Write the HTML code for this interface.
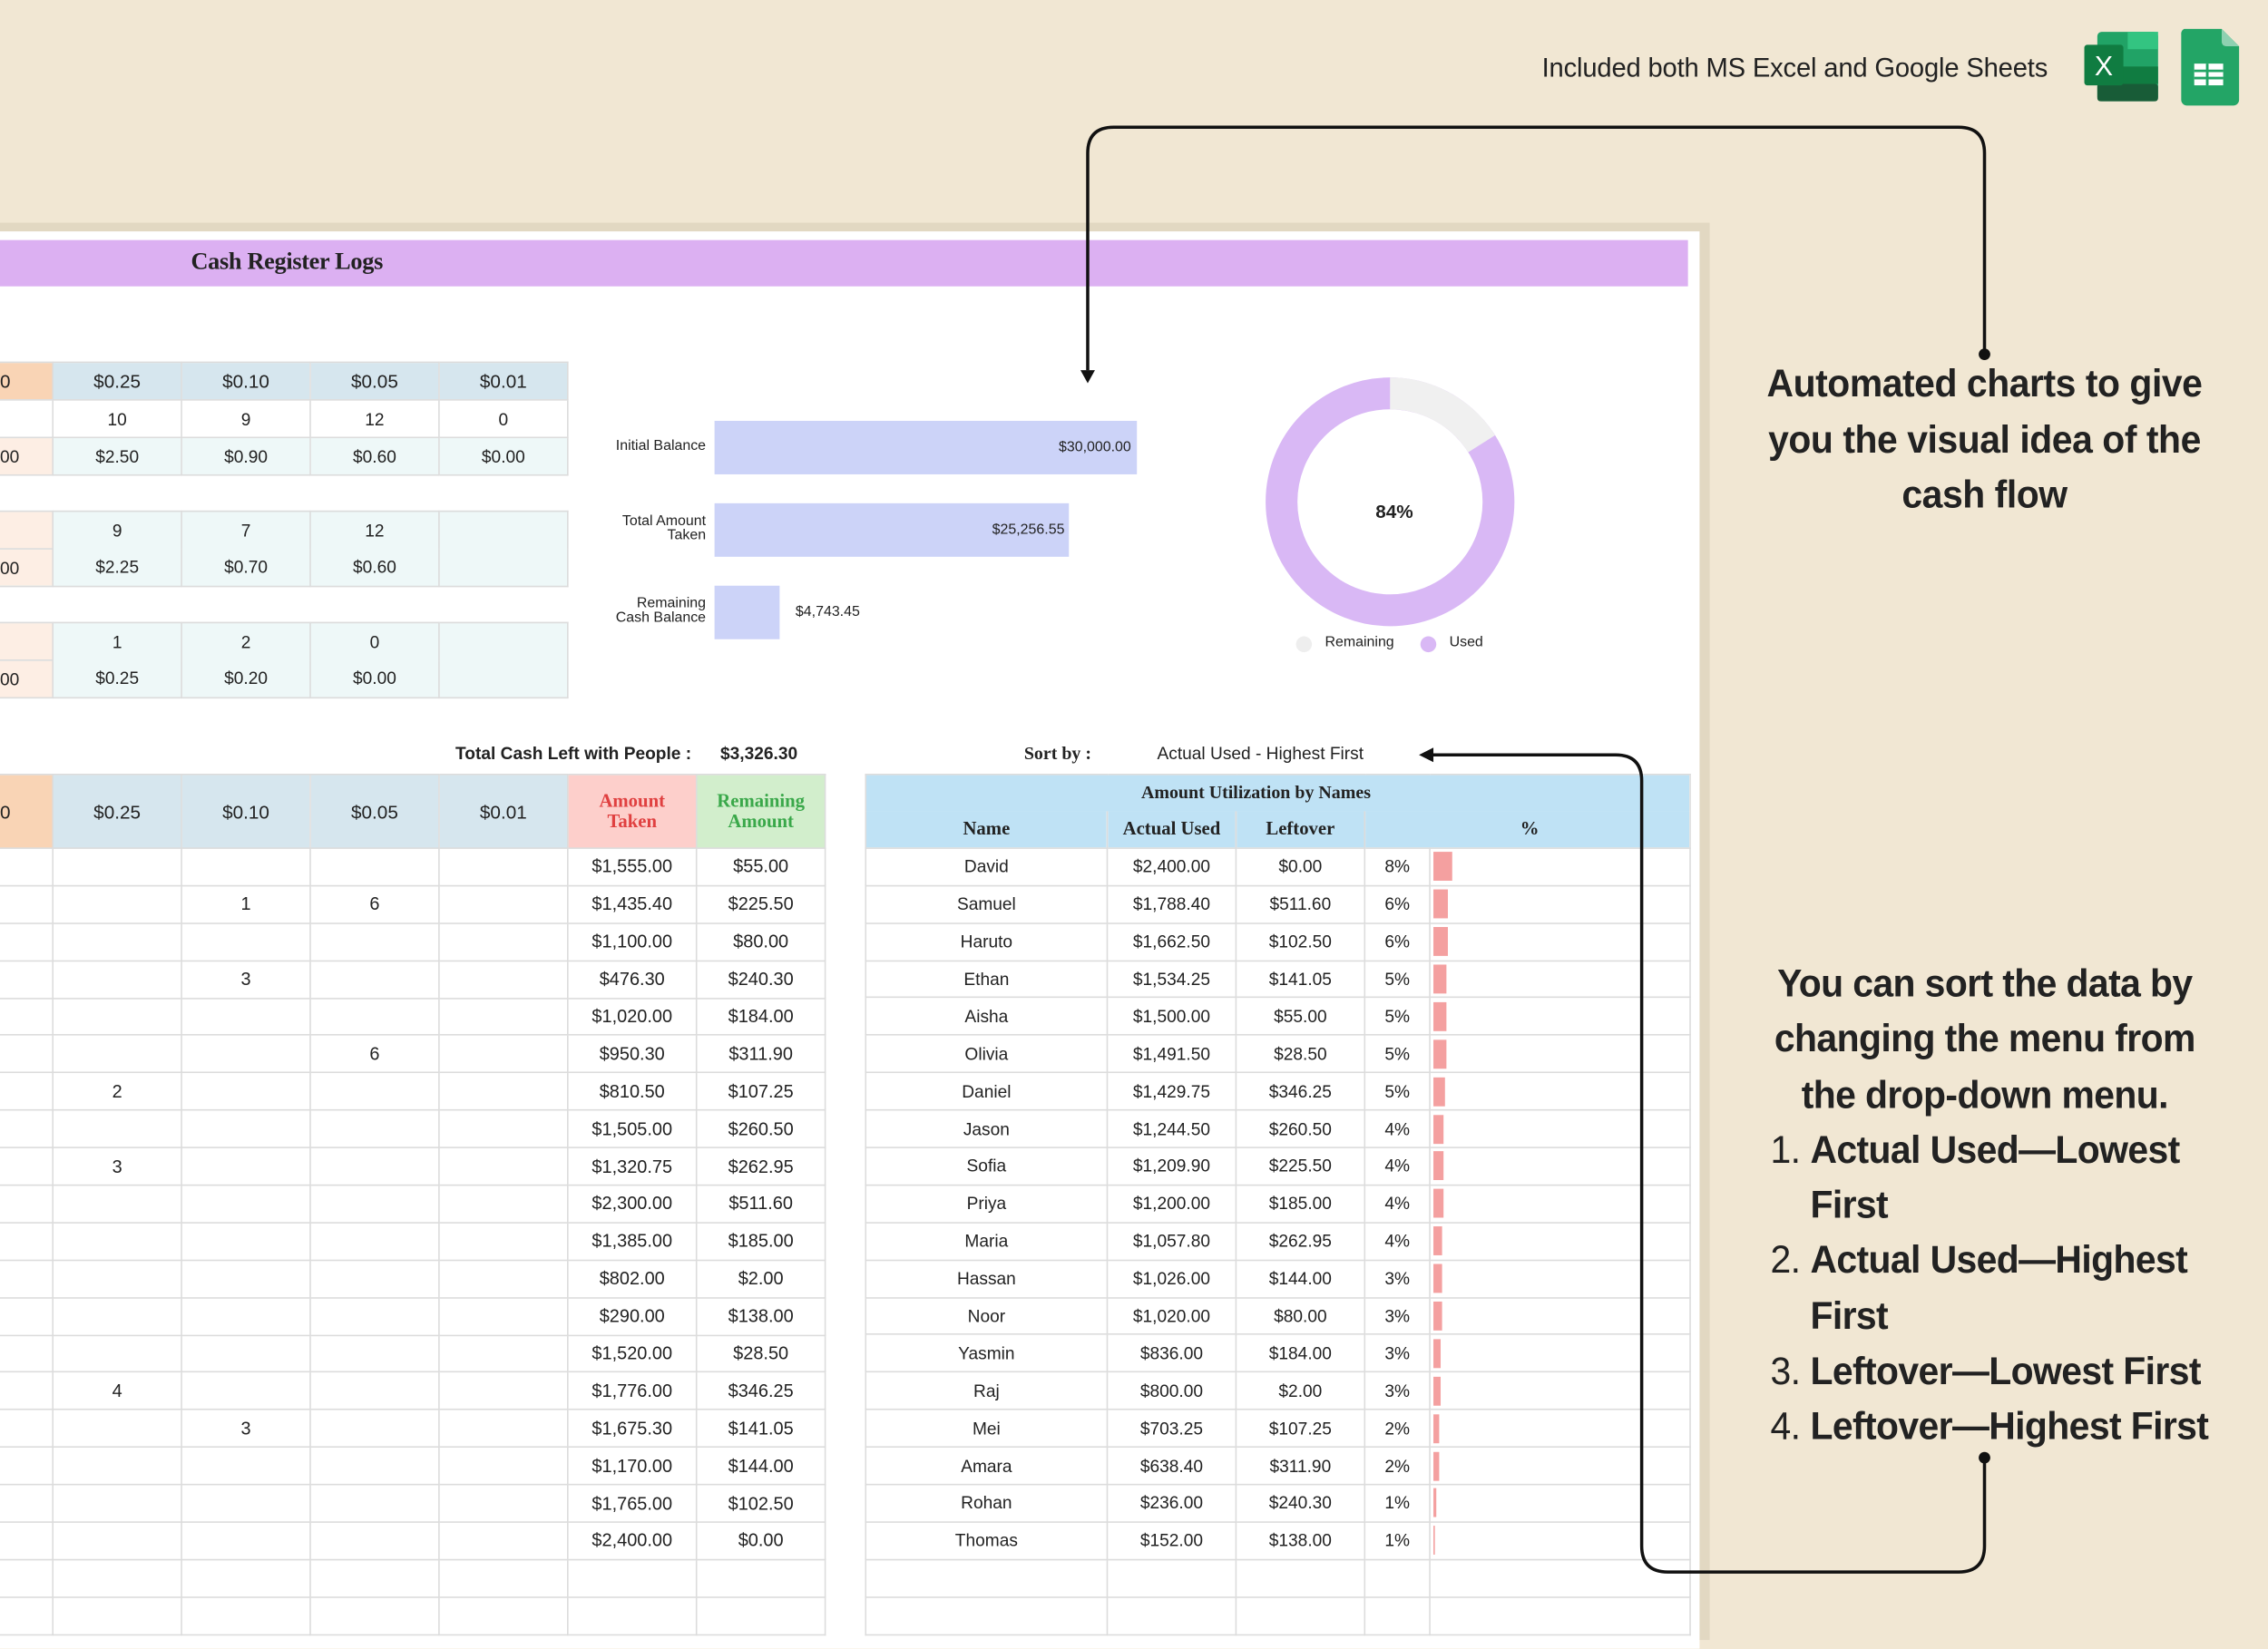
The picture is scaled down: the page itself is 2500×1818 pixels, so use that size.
<!DOCTYPE html>
<html><head><meta charset="utf-8"><style>
*{margin:0;padding:0;box-sizing:border-box}
html,body{width:2500px;height:1800px;overflow:hidden;background:#f1e7d3}
#w{position:absolute;left:0;top:0;width:1568px;height:1129px;transform:scale(1.59439);transform-origin:0 0;font-family:"Liberation Sans",sans-serif;color:#222}
.a{position:absolute}
table{border-collapse:collapse;table-layout:fixed;position:absolute;font-size:12px;text-align:center}
td{border:1px solid #dcdcdc;height:26px;padding:0;overflow:hidden;white-space:nowrap}
.h td{background:#d6e6ee;font-size:13px}
.o{background:#f9d4b5!important}
.ol{background:#fdeee4!important}
.lb{background:#eef8f8}
.big td{height:25.9px}
.rt td{height:25.9px}
.serif{font-family:"Liberation Serif",serif;font-weight:bold}
.bar{display:inline-block;height:20px;background:#f4a0a0;vertical-align:middle;float:left;margin-left:2px}
.big{font-size:12.5px}
.n{font-weight:normal;display:inline-block;width:29px;text-indent:0}
.li{padding-left:29px;text-indent:-29px}
</style></head><body><div id="w">

<div class="a" style="left:1066px;top:36px;font-size:18.3px;color:#222;letter-spacing:-0.1px">Included both MS Excel and Google Sheets</div>
<svg class="a" style="left:1438px;top:20px" width="60" height="54" viewBox="0 0 60 54">
<rect x="12" y="2" width="42" height="48" rx="3" fill="#21a366"/>
<rect x="33" y="2" width="21" height="12" fill="#33c481"/>
<rect x="12" y="26" width="42" height="12" fill="#107c41"/>
<rect x="12" y="38" width="42" height="12" rx="2" fill="#185c37"/>
<rect x="3" y="11" width="27" height="28" rx="2" fill="#107c41"/>
<text x="16.5" y="32" font-family="Liberation Sans" font-size="19" fill="#fff" text-anchor="middle">X</text>
</svg>
<svg class="a" style="left:1506px;top:19px" width="44" height="56" viewBox="0 0 44 56">
<path d="M4 1 H30 L42 13 V50 a4 4 0 0 1 -4 4 H6 a4 4 0 0 1 -4 -4 V5 a4 4 0 0 1 2 -4z" fill="#23a566"/>
<path d="M30 1 L42 13 H33 a3 3 0 0 1 -3 -3z" fill="#8ed1b1"/>
<rect x="11" y="25" width="20" height="15" fill="#fff"/>
<path d="M11 30H31M11 35H31M20 25V40" stroke="#23a566" stroke-width="1.8"/>
</svg>

<div class="a" style="left:0;top:154px;width:1182px;height:980px;background:#e2d8c2"></div>
<div class="a" style="left:0;top:160px;width:1175px;height:980px;background:#fff"></div>
<div class="a" style="left:0;top:166px;width:1167px;height:32px;background:#dcb0f2"></div>
<div class="a serif" style="left:132px;top:171px;font-size:16.5px;letter-spacing:-0.2px">Cash Register Logs</div>

<table style="left:-1px;top:250px;width:394px">
<colgroup><col style="width:37px"><col style="width:89px"><col style="width:89px"><col style="width:89px"><col style="width:89px"></colgroup>
<tr class="h"><td class="o" style="text-align:left">0</td><td>$0.25</td><td>$0.10</td><td>$0.05</td><td>$0.01</td></tr>
<tr><td></td><td>10</td><td>9</td><td>12</td><td>0</td></tr>
<tr class="lb"><td class="ol" style="text-align:left">00</td><td>$2.50</td><td>$0.90</td><td>$0.60</td><td>$0.00</td></tr>
</table>
<table style="left:-1px;top:353px;width:394px" class="lb">
<colgroup><col style="width:37px"><col style="width:89px"><col style="width:89px"><col style="width:89px"><col style="width:89px"></colgroup>
<tr><td class="ol"></td><td style="border-bottom:0">9</td><td style="border-bottom:0">7</td><td style="border-bottom:0">12</td><td rowspan="2"></td></tr>
<tr><td class="ol" style="text-align:left">00</td><td style="border-top:0">$2.25</td><td style="border-top:0">$0.70</td><td style="border-top:0">$0.60</td></tr>
</table>
<table style="left:-1px;top:430px;width:394px" class="lb">
<colgroup><col style="width:37px"><col style="width:89px"><col style="width:89px"><col style="width:89px"><col style="width:89px"></colgroup>
<tr><td class="ol"></td><td style="border-bottom:0">1</td><td style="border-bottom:0">2</td><td style="border-bottom:0">0</td><td rowspan="2"></td></tr>
<tr><td class="ol" style="text-align:left">00</td><td style="border-top:0">$0.25</td><td style="border-top:0">$0.20</td><td style="border-top:0">$0.00</td></tr>
</table>

<div class="a" style="left:400px;top:304px;width:88px;text-align:right;font-size:10px;line-height:10px">Initial Balance</div>
<div class="a" style="left:400px;top:356px;width:88px;text-align:right;font-size:10px;line-height:10px">Total Amount<br>Taken</div>
<div class="a" style="left:400px;top:413px;width:88px;text-align:right;font-size:10px;line-height:10px">Remaining<br>Cash Balance</div>
<div class="a" style="left:494px;top:291px;width:292px;height:37px;background:#ccd3f8"></div>
<div class="a" style="left:494px;top:348px;width:245px;height:37px;background:#ccd3f8"></div>
<div class="a" style="left:494px;top:405px;width:45px;height:37px;background:#ccd3f8"></div>
<div class="a" style="left:700px;top:304px;width:82px;text-align:right;font-size:10px">$30,000.00</div>
<div class="a" style="left:650px;top:361px;width:86px;text-align:right;font-size:10px">$25,256.55</div>
<div class="a" style="left:550px;top:418px;font-size:10px">$4,743.45</div>

<svg class="a" style="left:871px;top:257px" width="180" height="180" viewBox="0 0 180 180">
<circle cx="90" cy="90" r="75" fill="none" stroke="#d9b8f5" stroke-width="22"/>
<circle cx="90" cy="90" r="75" fill="none" stroke="#f0f0f0" stroke-width="22" stroke-dasharray="75.4 400" transform="rotate(-90 90 90)"/>
<text x="93" y="101" font-family="Liberation Sans" font-weight="bold" font-size="13" text-anchor="middle" fill="#222">84%</text>
</svg>
<div class="a" style="left:896px;top:440px;width:11px;height:11px;border-radius:50%;background:#eeeeee"></div>
<div class="a" style="left:916px;top:439px;font-size:10px">Remaining</div>
<div class="a" style="left:982px;top:440px;width:11px;height:11px;border-radius:50%;background:#d9b8f5"></div>
<div class="a" style="left:1002px;top:439px;font-size:10px">Used</div>

<div class="a" style="left:300px;top:514px;width:178px;text-align:right;font-size:12px;font-weight:bold">Total Cash Left with People :</div>
<div class="a" style="left:498px;top:514px;font-size:12px;font-weight:bold">$3,326.30</div>
<div class="a serif" style="left:708px;top:514px;font-size:12.5px">Sort by :</div>
<div class="a" style="left:800px;top:514px;font-size:12px">Actual Used - Highest First</div>

<table class="big" style="left:-1px;top:535px;width:572px">
<colgroup><col style="width:37px"><col style="width:89px"><col style="width:89px"><col style="width:89px"><col style="width:89px"><col style="width:89px"><col style="width:89px"></colgroup>
<tr class="h" style="height:51px"><td class="o" style="text-align:left;height:51px">0</td><td>$0.25</td><td>$0.10</td><td>$0.05</td><td>$0.01</td><td class="serif" style="background:#fdcfcb;color:#e04040;font-size:13px;line-height:14px">Amount<br>Taken</td><td class="serif" style="background:#d2eecc;color:#3aa84a;font-size:13px;line-height:14px">Remaining<br>Amount</td></tr>
<tr><td></td><td></td><td></td><td></td><td></td><td>$1,555.00</td><td>$55.00</td></tr>
<tr><td></td><td></td><td>1</td><td>6</td><td></td><td>$1,435.40</td><td>$225.50</td></tr>
<tr><td></td><td></td><td></td><td></td><td></td><td>$1,100.00</td><td>$80.00</td></tr>
<tr><td></td><td></td><td>3</td><td></td><td></td><td>$476.30</td><td>$240.30</td></tr>
<tr><td></td><td></td><td></td><td></td><td></td><td>$1,020.00</td><td>$184.00</td></tr>
<tr><td></td><td></td><td></td><td>6</td><td></td><td>$950.30</td><td>$311.90</td></tr>
<tr><td></td><td>2</td><td></td><td></td><td></td><td>$810.50</td><td>$107.25</td></tr>
<tr><td></td><td></td><td></td><td></td><td></td><td>$1,505.00</td><td>$260.50</td></tr>
<tr><td></td><td>3</td><td></td><td></td><td></td><td>$1,320.75</td><td>$262.95</td></tr>
<tr><td></td><td></td><td></td><td></td><td></td><td>$2,300.00</td><td>$511.60</td></tr>
<tr><td></td><td></td><td></td><td></td><td></td><td>$1,385.00</td><td>$185.00</td></tr>
<tr><td></td><td></td><td></td><td></td><td></td><td>$802.00</td><td>$2.00</td></tr>
<tr><td></td><td></td><td></td><td></td><td></td><td>$290.00</td><td>$138.00</td></tr>
<tr><td></td><td></td><td></td><td></td><td></td><td>$1,520.00</td><td>$28.50</td></tr>
<tr><td></td><td>4</td><td></td><td></td><td></td><td>$1,776.00</td><td>$346.25</td></tr>
<tr><td></td><td></td><td>3</td><td></td><td></td><td>$1,675.30</td><td>$141.05</td></tr>
<tr><td></td><td></td><td></td><td></td><td></td><td>$1,170.00</td><td>$144.00</td></tr>
<tr><td></td><td></td><td></td><td></td><td></td><td>$1,765.00</td><td>$102.50</td></tr>
<tr><td></td><td></td><td></td><td></td><td></td><td>$2,400.00</td><td>$0.00</td></tr>
<tr><td></td><td></td><td></td><td></td><td></td><td></td><td></td></tr>
<tr><td></td><td></td><td></td><td></td><td></td><td></td><td></td></tr>
</table>

<table class="rt" style="left:598px;top:535px;width:570px">
<colgroup><col style="width:167px"><col style="width:89px"><col style="width:89px"><col style="width:45px"><col style="width:180px"></colgroup>
<tr><td colspan="5" class="serif" style="background:#bfe2f5;border-bottom:0;height:25px;font-size:12.5px;text-align:left;padding-left:190px">Amount Utilization by Names</td></tr>
<tr class="serif" style="background:#bfe2f5;font-size:13px"><td style="border-top:0">Name</td><td style="border-top:0">Actual Used</td><td style="border-top:0">Leftover</td><td colspan="2" style="border-top:0;padding-left:0;text-align:left;text-indent:107px">%</td></tr>
<tr><td>David</td><td>$2,400.00</td><td>$0.00</td><td>8%</td><td><span class="bar" style="width:13px"></span></td></tr>
<tr><td>Samuel</td><td>$1,788.40</td><td>$511.60</td><td>6%</td><td><span class="bar" style="width:10px"></span></td></tr>
<tr><td>Haruto</td><td>$1,662.50</td><td>$102.50</td><td>6%</td><td><span class="bar" style="width:10px"></span></td></tr>
<tr><td>Ethan</td><td>$1,534.25</td><td>$141.05</td><td>5%</td><td><span class="bar" style="width:9px"></span></td></tr>
<tr><td>Aisha</td><td>$1,500.00</td><td>$55.00</td><td>5%</td><td><span class="bar" style="width:9px"></span></td></tr>
<tr><td>Olivia</td><td>$1,491.50</td><td>$28.50</td><td>5%</td><td><span class="bar" style="width:9px"></span></td></tr>
<tr><td>Daniel</td><td>$1,429.75</td><td>$346.25</td><td>5%</td><td><span class="bar" style="width:8px"></span></td></tr>
<tr><td>Jason</td><td>$1,244.50</td><td>$260.50</td><td>4%</td><td><span class="bar" style="width:7px"></span></td></tr>
<tr><td>Sofia</td><td>$1,209.90</td><td>$225.50</td><td>4%</td><td><span class="bar" style="width:7px"></span></td></tr>
<tr><td>Priya</td><td>$1,200.00</td><td>$185.00</td><td>4%</td><td><span class="bar" style="width:7px"></span></td></tr>
<tr><td>Maria</td><td>$1,057.80</td><td>$262.95</td><td>4%</td><td><span class="bar" style="width:6px"></span></td></tr>
<tr><td>Hassan</td><td>$1,026.00</td><td>$144.00</td><td>3%</td><td><span class="bar" style="width:6px"></span></td></tr>
<tr><td>Noor</td><td>$1,020.00</td><td>$80.00</td><td>3%</td><td><span class="bar" style="width:6px"></span></td></tr>
<tr><td>Yasmin</td><td>$836.00</td><td>$184.00</td><td>3%</td><td><span class="bar" style="width:5px"></span></td></tr>
<tr><td>Raj</td><td>$800.00</td><td>$2.00</td><td>3%</td><td><span class="bar" style="width:5px"></span></td></tr>
<tr><td>Mei</td><td>$703.25</td><td>$107.25</td><td>2%</td><td><span class="bar" style="width:4px"></span></td></tr>
<tr><td>Amara</td><td>$638.40</td><td>$311.90</td><td>2%</td><td><span class="bar" style="width:4px"></span></td></tr>
<tr><td>Rohan</td><td>$236.00</td><td>$240.30</td><td>1%</td><td><span class="bar" style="width:1.5px"></span></td></tr>
<tr><td>Thomas</td><td>$152.00</td><td>$138.00</td><td>1%</td><td><span class="bar" style="width:1px"></span></td></tr>
<tr><td></td><td></td><td></td><td></td><td></td></tr>
<tr><td></td><td></td><td></td><td></td><td></td></tr>
</table>

<svg class="a" style="left:0;top:0" width="1568" height="1129">
<path d="M752 256 V106 Q752 88 770 88 H1354 Q1372 88 1372 106 V245" fill="none" stroke="#111" stroke-width="2.2"/>
<path d="M747 256 L757 256 L752 265z" fill="#111"/>
<circle cx="1372" cy="245" r="4" fill="#111"/>
<path d="M1372 1008 V1069 Q1372 1087 1354 1087 H1153 Q1135 1087 1135 1069 V540 Q1135 522 1117 522 H990" fill="none" stroke="#111" stroke-width="2.2"/>
<path d="M981 522 L991 517 L991 527z" fill="#111"/>
<circle cx="1372" cy="1008" r="4" fill="#111"/>
</svg>

<div class="a" style="left:1172px;top:246px;width:400px;text-align:center;font-size:27px;font-weight:bold;line-height:38.5px;transform:scaleX(.95);letter-spacing:-0.3px;white-space:nowrap">Automated charts to give<br>you the visual idea of the<br>cash flow</div>
<div class="a" style="left:1224px;top:661px;width:312px;font-size:27px;font-weight:bold;line-height:38.3px;transform:scaleX(.95);transform-origin:0 0;letter-spacing:-0.4px;white-space:nowrap">
<div style="text-align:center">You can sort the data by</div>
<div style="text-align:center">changing the menu from</div>
<div style="text-align:center">the drop-down menu.</div>
<div class="li"><span class="n">1.</span>Actual Used—Lowest<br>First</div>
<div class="li"><span class="n">2.</span>Actual Used—Highest<br>First</div>
<div class="li"><span class="n">3.</span>Leftover—Lowest First</div>
<div class="li"><span class="n">4.</span>Leftover—Highest First</div>
</div>

</div></body></html>
